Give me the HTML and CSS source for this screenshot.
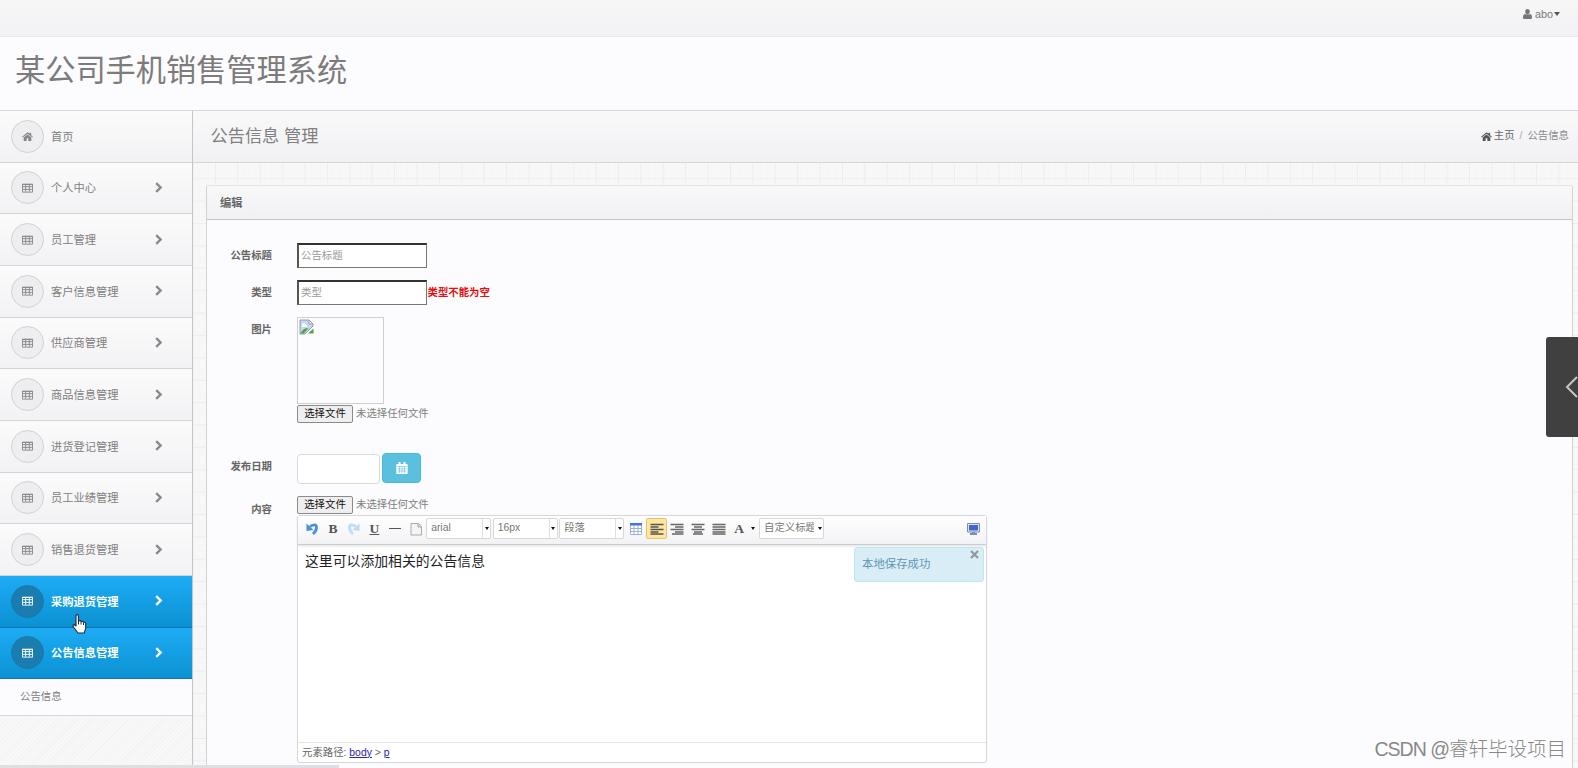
FILE: index.html
```html
<!DOCTYPE html>
<html lang="zh-CN">
<head>
<meta charset="utf-8">
<title>某公司手机销售管理系统</title>
<link rel="stylesheet" href="styles.css">
</head>
<body>
<svg class="defs" width="0" height="0">
  <symbol id="table" viewBox="0 0 12 10"><path fill="none" stroke="currentColor" d="M.5 1h11v8.5H.5zM.5 3.5h11M.5 6.5h11M4 1v8M8 1v8"/><path stroke="currentColor" d="M0 1h12"/></symbol>
  <symbol id="home" viewBox="0 0 12 10"><path fill="currentColor" d="M6 .2 8.300 2V.8H10v2.700l2 1.700-.7.900L6 1.900.7 6.100 0 5.200zM6 2.700l4.200 3.300V10H7V7H5v3H1.800V6z"/></symbol>
  <symbol id="chev" viewBox="0 0 8 11"><path fill="none" stroke="currentColor" stroke-width="2.4" d="M1.2 1.2 5.6 5.5 1.2 9.8"/></symbol>
</svg>
<div class="topbar"><div class="user"><svg width="9" height="10" viewBox="0 0 9 10"><path fill="currentColor" d="M4.5 0C6 0 6.8 1 6.8 2.500S6 5.400 4.500 5.400 2.200 4 2.200 2.500 3 0 4.500 0zM2 5c1.500 1 3.500 1 5 0 1.600.3 2 1.800 2 3.500 0 1-.6 1.500-1.400 1.500H1.400C.6 10 0 9.500 0 8.500c0-1.700.4-3.200 2-3.500z"/></svg><span>abo</span><i class="caret"></i></div></div>
<header class="brand"><h1>某公司手机销售管理系统</h1></header>
<div class="body">
  <nav class="side">
    <a class="item"><b class="disc"><svg width="11" height="9"><use href="#home"/></svg></b><span>首页</span></a>
    <a class="item"><b class="disc"><svg width="11" height="10"><use href="#table"/></svg></b><span>个人中心</span><svg class="chev" width="8" height="11"><use href="#chev"/></svg></a>
    <a class="item"><b class="disc"><svg width="11" height="10"><use href="#table"/></svg></b><span>员工管理</span><svg class="chev" width="8" height="11"><use href="#chev"/></svg></a>
    <a class="item"><b class="disc"><svg width="11" height="10"><use href="#table"/></svg></b><span>客户信息管理</span><svg class="chev" width="8" height="11"><use href="#chev"/></svg></a>
    <a class="item"><b class="disc"><svg width="11" height="10"><use href="#table"/></svg></b><span>供应商管理</span><svg class="chev" width="8" height="11"><use href="#chev"/></svg></a>
    <a class="item"><b class="disc"><svg width="11" height="10"><use href="#table"/></svg></b><span>商品信息管理</span><svg class="chev" width="8" height="11"><use href="#chev"/></svg></a>
    <a class="item"><b class="disc"><svg width="11" height="10"><use href="#table"/></svg></b><span>进货登记管理</span><svg class="chev" width="8" height="11"><use href="#chev"/></svg></a>
    <a class="item"><b class="disc"><svg width="11" height="10"><use href="#table"/></svg></b><span>员工业绩管理</span><svg class="chev" width="8" height="11"><use href="#chev"/></svg></a>
    <a class="item"><b class="disc"><svg width="11" height="10"><use href="#table"/></svg></b><span>销售退货管理</span><svg class="chev" width="8" height="11"><use href="#chev"/></svg></a>
    <a class="item on"><b class="disc"><svg width="11" height="10"><use href="#table"/></svg></b><span>采购退货管理</span><svg class="chev" width="8" height="11"><use href="#chev"/></svg></a>
    <a class="item on"><b class="disc"><svg width="11" height="10"><use href="#table"/></svg></b><span>公告信息管理</span><svg class="chev" width="8" height="11"><use href="#chev"/></svg></a>
    <a class="sub">公告信息</a>
  </nav>
  <main class="main">
    <div class="pagehead"><h2>公告信息 管理</h2><div class="crumb"><svg width="11" height="9"><use href="#home"/></svg><span class="cur">主页</span><i>/</i><span>公告信息</span></div></div>
    <section class="panel">
      <div class="phead">编辑</div>
      <div class="form">
        <div class="row r1"><label>公告标题</label><div class="field"><div class="inp">公告标题</div></div></div>
        <div class="row r2"><label>类型</label><div class="field"><div class="inp">类型</div><strong class="err">类型不能为空</strong></div></div>
        <div class="row r3"><label>图片</label><div><div class="img"><svg width="16" height="16" viewBox="0 0 16 16"><path fill="#c4d8f4" stroke="#949aa5" d="M1 1h9l4 4v2l-8 8H1z"/><path fill="#fff" stroke="#949aa5" d="M10 1v4h4z"/><path fill="#fff" d="M3 6q2-4 4 0h1v2H3z"/><path fill="#4ba73b" d="M1.500 14.500q3-6 8-5l-5 5zM9 14.500l5.500-5v5z"/></svg></div><div class="file"><span class="fbtn">选择文件</span><span>未选择任何文件</span></div></div></div>
        <div class="row r4"><label>发布日期</label><div class="field"><div class="date"></div><div class="cal"><svg width="12" height="12" viewBox="0 0 12 12"><path fill="#fff" d="M1 2h1.500V0h2v2h3V0h2v2H11q.7 0 .7.8V12H.3V2.800Q.3 2 1 2z"/><path stroke="#5bc0de" stroke-width=".6" d="M1.500 4.500h9M1.500 6.800h9M1.500 9h9M3.500 4.500V11M6 4.500V11M8.500 4.500V11"/></svg></div></div></div>
        <div class="row r5"><label>内容</label><div>
          <div class="file"><span class="fbtn">选择文件</span><span>未选择任何文件</span></div>
          <div class="editor">
            <div class="tools">
              <span class="t"><svg width="14" height="14" viewBox="0 0 14 14"><path fill="none" stroke="#4a90d9" stroke-width="2.800" d="M5 4.500Q11.500 1 11.500 5.500 11.500 9 8 12"/><path fill="#4a90d9" d="M1.500 1.500v7.500l7-1z"/></svg></span>
              <span class="t bold">B</span>
              <span class="t"><svg width="14" height="14" viewBox="0 0 14 14"><path fill="none" stroke="#bddcf3" stroke-width="2.800" d="M9 4.500Q2.500 1 2.500 5.500 2.500 9 6 12"/><path fill="#bddcf3" d="M12.500 1.500v7.500l-7-1z"/></svg></span>
              <span class="t under">U</span>
              <span class="t"><svg width="14" height="14"><path stroke="#555" d="M1 6.500h12"/></svg></span>
              <span class="t"><svg width="14" height="14" viewBox="0 0 14 14"><path fill="#f4f4f6" stroke="#aaa" d="M2 1.500h7.500l3 3v8.500H2z"/><path fill="#cfdcee" stroke="#aaa" d="M9 1.500v3.500h3.500"/></svg></span>
              <span class="sel s1"><em>arial</em><u><i></i></u></span>
              <span class="sel s2"><em>16px</em><u><i></i></u></span>
              <span class="sel s3"><em>段落</em><u><i></i></u></span>
              <span class="t tb"><svg width="12" height="12" viewBox="0 0 12 12"><path fill="#fff" stroke="#9fb3d6" d="M.5.5h11v11H.5zM.5 5.500h11M.5 8.500h11M4 1v10M8 1v10"/><path fill="#4a72dc" d="M0 0h12v2.500H0z"/></svg></span>
              <span class="t act"><svg width="14" height="12"><path stroke="#555" stroke-width="1.300" d="M.5 1.500h13M.5 4h8M.5 6.500h13M.5 9h8M.5 11h13"/></svg></span>
              <span class="t al"><svg width="14" height="12"><path stroke="#666" stroke-width="1.300" d="M.5 1.500h13M5 4h8.500M.5 6.500h13M5 9h8.500M2 11h11.500"/></svg></span>
              <span class="t al"><svg width="14" height="12"><path stroke="#666" stroke-width="1.300" d="M.5 1.500h13M3 4h8M.5 6.500h13M3 9h8M2 11h10"/></svg></span>
              <span class="t al"><svg width="14" height="12"><path stroke="#666" stroke-width="1.300" d="M.5 1.500h13M.5 4h13M.5 6.500h13M.5 9h13M.5 11h13"/></svg></span>
              <span class="t fore">A</span><i class="dd"></i>
              <span class="sel s4"><em>自定义标题</em><u><i></i></u></span>
              <span class="t full"><svg width="13" height="12" viewBox="0 0 13 12"><path fill="#dde2ef" stroke="#7c8bb0" d="M.5.5h12v8.500H.5z"/><path fill="#3f68cc" d="M2 2h9v5.500H2z"/><path fill="#7c8bb0" d="M5 9h3v1h2v2H3v-2h2z"/></svg></span>
            </div>
            <div class="edit"><p>这里可以添加相关的公告信息</p><div class="toast">本地保存成功<svg width="9" height="9"><path stroke="#929799" stroke-width="2.200" d="m1 1 7 7M8 1 1 8"/></svg></div></div>
            <div class="path">元素路径: <a>body</a> &gt; <a>p</a></div>
          </div>
        </div></div>
      </div>
    </section>
  </main>
</div>
<div class="drawer"><svg width="13" height="24"><path fill="none" stroke="#c6c6c6" stroke-width="2" d="M12 2 2 12l10 10"/></svg></div>
<div class="status"></div>
<div class="mark"><span>CSDN @</span>睿轩毕设项目</div>
<svg class="hand" width="16" height="20" viewBox="0 0 16 20"><path fill="#fff" stroke="#222b38" stroke-width="1.100" stroke-linejoin="round" d="M4 12V2q0-1.400 1.200-1.400T6.400 2v5q2-1 2.600.4 1.800-.5 2.400.8 2.300-.4 2.300 1.600v4.500L12.200 19H6L1.500 13Q.3 11 2 10.500z"/><path stroke="#222b38" d="M6.500 7v3.500M9 7.500v3M11.500 8.500v2.500"/></svg>
</body>
</html>
```
FILE: styles.css
```css
* { box-sizing: border-box; }
body { margin: 0; width: 1578px; height: 768px; overflow: hidden; position: relative; background: #fcfbfd; color: #808080; font: 400 10.4px/14px "Liberation Sans", "Noto Sans CJK SC", sans-serif; }
svg { display: block; flex: none; }
h1, h2, p { margin: 0; font-weight: 400; }
i, em { font-style: normal; }
.defs { position: absolute; }
.topbar { height: 37px; background: linear-gradient(#f7f7f7, #f2f1f4); border-bottom: 1px solid #e9e8eb; display: flex; justify-content: flex-end; padding: 7px 18px 0 0; }
.user { display: flex; align-items: center; height: 14px; gap: 3px; color: #777; font-size: 10.800px; }
.caret { border: 3.500px solid transparent; border-top: 4px solid #555; border-bottom: 0; margin-left: -2px; }
.brand { height: 74px; border-bottom: 1px solid #d8d7dc; padding: 12px 15px; }
h1 { font-size: 30.200px; line-height: 44px; color: #7c7c7c; }
.body { display: flex; height: 657px; }
.side { width: 193px; border-right: 1px solid #c5c5c8; background: repeating-linear-gradient(135deg, #f8f8f9 0 2px, #f3f3f4 2px 3px); }
.item { display: flex; align-items: center; height: 51.670px; padding-left: 11px; background: linear-gradient(#fbfbfc, #f2f1f3); border-bottom: 1px solid #d3d2d6; font-size: 11.250px; color: #808080; }
.disc { width: 33px; height: 33px; border: 1px solid #d2d0d4; border-radius: 50%; background: #eeedf0; display: flex; align-items: center; justify-content: center; margin-right: 7px; color: #858585; }
.item span { width: 103.500px; white-space: nowrap; padding-top: 1px; }
.chev { color: #8a8a8c; margin-top: -1px; }
.on { background: linear-gradient(#1eacf4, #0b91d3); border-color: #0978b0; color: #fff; font-weight: 700; }
.on .disc { background: #1a7caf; border-color: #1878aa; color: #fff; }
.on .chev { color: #fff; }
.sub { display: block; height: 37px; line-height: 36px; padding-left: 20px; background: #fcfbfd; border-bottom: 1px solid #d8d7dc; }
.main { flex: 1; display: flex; flex-direction: column; background-color: #fafafb; background-image: linear-gradient(90deg, #ededef 1px, transparent 1px), linear-gradient(#ededef 1px, transparent 1px), linear-gradient(90deg, #f5f5f6 1px, transparent 1px), linear-gradient(#f5f5f6 1px, transparent 1px); background-size: 22.400px 22.400px, 22.400px 22.400px, 2.240px 2.240px, 2.240px 2.240px; background-position: 22px 0; }
.pagehead { height: 52px; background: linear-gradient(#f9f9fa, #f1f0f3); border-bottom: 1px solid #d6d5da; display: flex; justify-content: space-between; align-items: center; padding: 0 9px 2px 17.500px; }
h2 { font-size: 17.200px; line-height: 26px; }
.crumb { display: flex; align-items: center; color: #888; padding-top: 1px; }
.crumb svg { color: #555; margin-right: 2px; }
.crumb i { padding: 0 5px; color: #aaa; }
.cur { color: #666; }
.panel { flex: 1; margin: 22px 5px 0 13px; border: 1px solid #d2d2d6; border-top-color: #e2e2e4; border-bottom: 0; border-radius: 2px 2px 0 0; background: #fcfbfd; }
.phead { height: 34px; padding: 10px 13px; font-weight: 700; font-size: 11.250px; color: #666; background: linear-gradient(#f8f8f9, #f1f0f3); border-bottom: 1px solid #c7c6cb; }
.form { padding-top: 24px; }
.row { display: grid; grid-template-columns: 65px 1fr; column-gap: 25px; }
.row label { text-align: right; font-weight: 700; color: #666; padding-top: 5px; }
.r1, .r2 { height: 37px; }
.r1 .inp, .r2 .inp { margin-top: -1px; }
.r3 { height: 135px; }
.r3 .img { margin-top: -1px; }
.r4 { height: 42.500px; }
.r4 label { padding-top: 7px; }
.r5 label { padding-top: 7px; }
.field { display: flex; align-items: flex-start; }
.inp { width: 130px; height: 24.500px; border: 2px solid; border-color: #333 #777 #777 #555; border-right-width: 1px; border-bottom-width: 1px; background: #fff; color: #999; padding: 4px 2px; }
.err { color: #e31212; padding-top: 5px; margin-left: .5px; font-weight: 700; }
.img { width: 87px; height: 87px; border: 1px solid #cfced2; padding: 1px; }
.file { display: flex; align-items: center; height: 19px; gap: 3px; white-space: nowrap; }
.fbtn { width: 56px; height: 18px; line-height: 16px; border: 1px solid #8b8b8b; border-radius: 2px; background: #efefef; color: #111; text-align: center; }
.date { width: 83px; height: 30px; border: 1px solid #d9d8dd; border-radius: 4px; background: #fff; margin: 1px 2px 0 0; }
.cal { width: 39px; height: 30px; border: 1px solid #46b8da; border-radius: 4px; background: #5bc0de; display: flex; align-items: center; justify-content: center; }
.editor { width: 690px; height: 248px; border: 1px solid #d6d5d9; border-radius: 3px; background: #fff; display: flex; flex-direction: column; }
.tools { height: 29px; display: flex; align-items: center; background: linear-gradient(#fff, #f2f1f4); border-bottom: 1px solid #ccc; box-shadow: 0 1px 3px #ddd; padding: 0 6px 2px 4px; }
.t { width: 20.700px; height: 20px; display: flex; align-items: center; justify-content: center; font: 700 13.500px/18px "Liberation Serif", serif; color: #555; flex: none; }
.under { text-decoration: underline; }
.sel { height: 21px; background: #fff; border: 1px solid #d7d7da; border-radius: 2px; display: flex; margin-right: 1.500px; font-size: 10.400px; color: #777; flex: none; }
.sel em { flex: 1; min-width: 0; overflow: hidden; white-space: nowrap; padding-left: 4px; line-height: 18px; }
.sel u { width: 8px; display: flex; align-items: center; justify-content: center; border-left: 1px solid #e0e0e0; }
.sel i, .dd { border: 2.500px solid transparent; border-top: 3px solid #111; border-bottom: 0; }
.s1 { width: 65px; }
.s2 { width: 65px; }
.s3 { width: 65px; margin-right: 1.500px; }
.s4 { width: 65px; margin-left: 3px; }
.s4 em { padding-left: 4px; margin-right: 3px; }
.s4 u { border-left: 0; width: 6px; }
.act { background: #ffe69f; border: 1px solid #e8c173; border-radius: 2px; height: 21px; }
.fore { width: 20px; }
.dd { margin: 0 1px 0 2px; }
.full { margin-left: auto; width: 13px; }
.edit { flex: 1; position: relative; padding: 5px 7px; }
.edit p { font-size: 13.850px; line-height: 22px; color: #222; }
.toast { position: absolute; right: 2px; top: 2px; width: 130px; height: 35px; padding: 9px 7px; background: #d9edf7; border: 1px solid #bce8f1; border-radius: 3px; color: #5f97b3; font-size: 11.400px; }
.toast svg { position: absolute; right: 4px; top: 2px; }
.path { height: 20px; border-top: 1px solid #e3e2e5; padding: 3px 4px; color: #666; }
.path a { color: #2323ac; text-decoration: underline; }
.drawer { position: absolute; right: 0; top: 337px; width: 32px; height: 100px; border-radius: 3px 0 0 3px; background: #404040; display: flex; align-items: center; justify-content: flex-end; }
.status { position: absolute; left: 0; bottom: 0; width: 339px; height: 3px; background: #dedee3; }
.mark { position: absolute; right: 12px; top: 735px; font-size: 19.500px; font-weight: 300; line-height: 28px; color: #888; white-space: nowrap; text-shadow: -1px -1px #fff; }
.mark span { letter-spacing: -1px; }
.hand { position: absolute; left: 72px; top: 614px; }
```
